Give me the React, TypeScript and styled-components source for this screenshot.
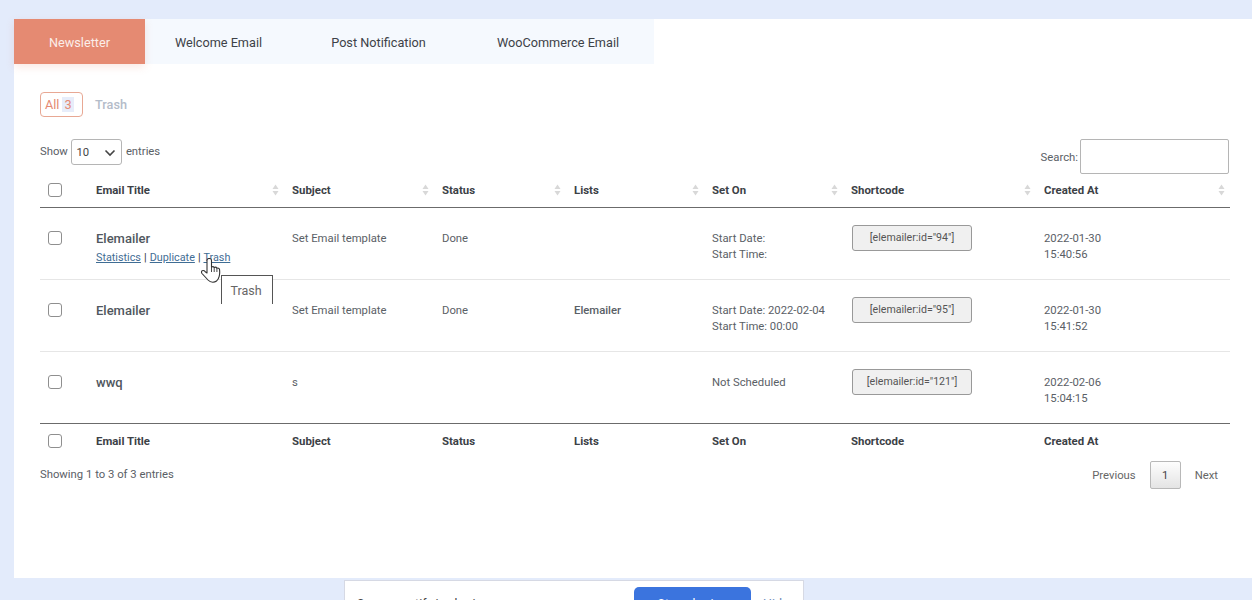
import React from 'react';
import styled, { createGlobalStyle } from 'styled-components';

const GlobalStyle = createGlobalStyle`
  html, body {
    margin: 0;
    padding: 0;
    height: 600px;
    overflow: hidden;
    background: #e3ebfb;
    font-family: Roboto, "Noto Sans", sans-serif;
    font-size: 11.3px;
    color: #5a6066;
  }
`;

const Page = styled.div`
  height: 600px;
  padding-top: 19px;
  box-sizing: border-box;
  overflow: hidden;
`;

const Panel = styled.main`
  margin-left: 14px;
  height: 559px;
  background: #fff;
  box-sizing: border-box;
`;

const TabBar = styled.nav`
  display: flex;
  width: 640px;
  height: 45px;
  background: #f5f9fe;
`;

const Tab = styled.div<{ $active?: boolean; $width: number }>`
  width: ${(p) => p.$width}px;
  display: flex;
  align-items: center;
  justify-content: center;
  padding-top: 1px;
  box-sizing: border-box;
  font-size: 12.7px;
  color: ${(p) => (p.$active ? '#fbeee9' : '#3d4248')};
  background: ${(p) => (p.$active ? '#e58a72' : 'transparent')};
  box-shadow: ${(p) => (p.$active ? '0 3px 8px rgba(229, 138, 114, 0.2)' : 'none')};
`;

const Content = styled.div`
  padding: 28px 22px 0 26px;
`;

const StatusFilter = styled.div`
  display: flex;
  align-items: center;
  gap: 12px;
  height: 25px;
  font-size: 12.7px;
`;

const AllPill = styled.div`
  display: flex;
  align-items: center;
  gap: 3px;
  box-sizing: border-box;
  width: 43px;
  height: 25px;
  padding: 0 4px;
  border: 1px solid #e8a894;
  border-radius: 4px;
  color: #e58a72;
`;

const Count = styled.span`
  background: #e7edfa;
  padding: 0 2px;
`;

const TrashFilter = styled.span`
  color: #b4bcc9;
  font-weight: 500;
`;

const Controls = styled.div`
  display: flex;
  justify-content: space-between;
  align-items: flex-start;
  margin-top: 22px;
  height: 34px;
`;

const LengthControl = styled.div`
  display: flex;
  align-items: flex-start;
  gap: 3.500px;
  line-height: 26px;
`;

const FakeSelect = styled.div`
  display: flex;
  align-items: center;
  justify-content: space-between;
  box-sizing: border-box;
  width: 51px;
  height: 26px;
  padding: 2px 5px 0 4px;
  border: 1px solid #b5b5b5;
  border-radius: 3px;
  color: #444;
  font-size: 11.3px;
`;

const SearchControl = styled.label`
  display: flex;
  align-items: flex-start;
  gap: 2px;
  margin-right: 1px;
  line-height: 37px;
`;

const SearchBox = styled.div`
  box-sizing: border-box;
  width: 149px;
  height: 35px;
  border: 1px solid #b5b5b5;
  border-radius: 2px;
`;

const Table = styled.table`
  width: 1190px;
  border-collapse: collapse;
  table-layout: fixed;
`;

const HeadCell = styled.th<{ $edge: 'top' | 'bottom' }>`
  position: relative;
  height: 34px;
  padding: ${(p) => (p.$edge === 'top' ? '2px' : '1px')} 8px 0;
  box-sizing: border-box;
  text-align: left;
  font-weight: 700;
  font-size: 11.4px;
  color: #3c4146;
  border-${(p) => p.$edge}: 1px solid #6b6b6b;
`;

const Row = styled.tr`
  border-bottom: 1px solid #e6e6e6;
  &:last-child {
    border-bottom: none;
  }
`;

const Cell = styled.td`
  height: 72px;
  box-sizing: border-box;
  padding: 23px 8px 0;
  vertical-align: top;
  line-height: 16px;
  position: relative;
`;

const ShortcodeCell = styled(Cell)`
  padding-top: 17px;
`;

const Title = styled.div`
  font-size: 13px;
  font-weight: 500;
  color: #50575e;
  line-height: 16px;
`;

const RowActions = styled.div`
  margin-top: 3px;
  font-size: 10.8px;
  word-spacing: 0.4px;
  color: #333;
  white-space: nowrap;
  a {
    color: #3f6d94;
    text-decoration: underline;
  }
`;

const Strong = styled.span`
  font-weight: 500;
`;

const Box = styled.span`
  display: block;
  box-sizing: border-box;
  width: 14px;
  height: 14px;
  border: 1.3px solid #8f8f8f;
  border-radius: 3px;
  background: #fff;
`;

const ShortcodeBox = styled.div`
  display: flex;
  align-items: center;
  justify-content: center;
  box-sizing: border-box;
  width: 120px;
  height: 26px;
  margin-left: 1px;
  font-size: 10.6px;
  color: #555;
  background: #f0f0f0;
  border: 1px solid #999;
  border-radius: 3px;
`;

const SortArrows = styled.svg`
  position: absolute;
  right: 5px;
  top: 11px;
`;

const Tooltip = styled.div`
  position: absolute;
  left: 133px;
  top: 67px;
  width: 52px;
  height: 29px;
  box-sizing: border-box;
  padding: 7px 2px 0 0;
  text-align: center;
  font-size: 12.5px;
  color: #666;
  background: #fff;
  border: 1px solid #555;
  border-bottom: none;
  z-index: 2;
`;

const Cursor = styled.svg`
  position: absolute;
  left: 113px;
  top: 50px;
  z-index: 3;
`;

const Footer = styled.div`
  display: flex;
  justify-content: space-between;
  align-items: flex-start;
  margin-top: 4px;
`;

const Info = styled.div`
  margin-top: 7px;
`;

const Pager = styled.div`
  display: flex;
  align-items: center;
  gap: 14px;
  margin-right: 12px;
  color: #666;
`;

const PageNumber = styled.div`
  display: flex;
  align-items: center;
  justify-content: center;
  box-sizing: border-box;
  width: 31px;
  height: 28px;
  color: #444;
  background: linear-gradient(#fdfdfd, #e4e4e4);
  border: 1px solid #b8b8b8;
  border-radius: 2px;
`;

const NoticeBar = styled.div`
  display: flex;
  align-items: flex-start;
  box-sizing: border-box;
  width: 460px;
  height: 60px;
  margin: 2px 0 0 344px;
  padding: 6px 12px 0 12px;
  background: #fff;
  border: 1px solid #d6d9e4;
`;

const NoticeText = styled.div`
  flex: 1;
  padding-top: 9px;
  font-size: 12.5px;
  color: #444;
`;

const NoticeButton = styled.div`
  width: 117px;
  height: 40px;
  padding-top: 9px;
  box-sizing: border-box;
  text-align: center;
  font-size: 12.5px;
  color: #fff;
  background: #3b74de;
  border-radius: 5px 5px 0 0;
`;

const NoticeLink = styled.div`
  width: 28px;
  margin-left: 12px;
  padding-top: 9px;
  font-size: 12.5px;
  color: #6a86b8;
`;

const columns = [
  { label: 'Email Title', width: 196 },
  { label: 'Subject', width: 150 },
  { label: 'Status', width: 132 },
  { label: 'Lists', width: 138 },
  { label: 'Set On', width: 139 },
  { label: 'Shortcode', width: 193 },
  { label: 'Created At', width: 194 },
];

const rows = [
  {
    title: 'Elemailer',
    subject: 'Set Email template',
    status: 'Done',
    lists: '',
    setOn: ['Start Date:', 'Start Time:'],
    shortcode: '[elemailer:id="94"]',
    created: ['2022-01-30', '15:40:56'],
  },
  {
    title: 'Elemailer',
    subject: 'Set Email template',
    status: 'Done',
    lists: 'Elemailer',
    setOn: ['Start Date: 2022-02-04', 'Start Time: 00:00'],
    shortcode: '[elemailer:id="95"]',
    created: ['2022-01-30', '15:41:52'],
  },
  {
    title: 'wwq',
    subject: 's',
    status: '',
    lists: '',
    setOn: ['Not Scheduled'],
    shortcode: '[elemailer:id="121"]',
    created: ['2022-02-06', '15:04:15'],
  },
];

const Sort = () => (
  <SortArrows width="7" height="12" viewBox="0 0 7 12">
    <path d="M3.5 0.5 L6.5 5 H0.5 Z" fill="#d8d8d8" />
    <path d="M3.5 11.5 L6.5 7 H0.5 Z" fill="#d8d8d8" />
  </SortArrows>
);

const HandCursor = () => (
  <Cursor width="21" height="26" viewBox="0 0 21 26">
    <path
      d="M6 2.500c0-1.200.9-2 2.200-2s2.300.8 2.300 2V9c1-.5 2.200-.3 2.700.5 1-.5 2.200-.2 2.700.7 1-.4 2.300 0 2.600 1.200.3 2 .2 5-.3 7-.4 1.800-1.400 3.500-2.700 4.600-1 .8-2.400 1.200-3.700 1.200-2 0-3.500-.8-4.800-2.200L1 15.500c-.8-1-.7-2.200.2-2.700 1-.5 2.200-.1 3 .9L6 15Z"
      fill="#fff"
      stroke="#333"
      strokeWidth="1.100"
      strokeLinejoin="round"
    />
    <path d="M10.500 9v5M13.200 9.500V14M15.900 10.200V14" stroke="#333" strokeWidth="0.900" fill="none" />
  </Cursor>
);

const HeaderRow = ({ edge, sortable }: { edge: 'top' | 'bottom'; sortable?: boolean }) => (
  <tr>
    <HeadCell $edge={edge}>
      <Box />
    </HeadCell>
    {columns.map((c) => (
      <HeadCell $edge={edge} key={c.label}>
        {c.label}
        {sortable && <Sort />}
      </HeadCell>
    ))}
  </tr>
);

export default function App() {
  return (
    <>
      <GlobalStyle />
      <Page>
        <Panel>
          <TabBar>
            <Tab $active $width={131}>Newsletter</Tab>
            <Tab $width={147}>Welcome Email</Tab>
            <Tab $width={173}>Post Notification</Tab>
            <Tab $width={186}>WooCommerce Email</Tab>
          </TabBar>
          <Content>
            <StatusFilter>
              <AllPill>
                All <Count>3</Count>
              </AllPill>
              <TrashFilter>Trash</TrashFilter>
            </StatusFilter>
            <Controls>
              <LengthControl>
                Show
                <FakeSelect>
                  10
                  <svg width="12" height="8" viewBox="0 0 12 8">
                    <path d="M1.500 1.500 6 6l4.500-4.500" stroke="#444" strokeWidth="1.600" fill="none" />
                  </svg>
                </FakeSelect>
                entries
              </LengthControl>
              <SearchControl>
                Search:
                <SearchBox />
              </SearchControl>
            </Controls>
            <Table>
              <colgroup>
                <col style={{ width: 48 }} />
                {columns.map((c) => (
                  <col key={c.label} style={{ width: c.width }} />
                ))}
              </colgroup>
              <thead>
                <HeaderRow edge="bottom" sortable />
              </thead>
              <tbody>
                {rows.map((r, i) => (
                  <Row key={r.shortcode}>
                    <Cell>
                      <Box />
                    </Cell>
                    <Cell>
                      <Title>{r.title}</Title>
                      {i === 0 && (
                        <>
                          <RowActions>
                            <a>Statistics</a> | <a>Duplicate</a> | <a>Trash</a>
                          </RowActions>
                          <HandCursor />
                          <Tooltip>Trash</Tooltip>
                        </>
                      )}
                    </Cell>
                    <Cell>{r.subject}</Cell>
                    <Cell>{r.status}</Cell>
                    <Cell>
                      <Strong>{r.lists}</Strong>
                    </Cell>
                    <Cell>
                      {r.setOn.map((line) => (
                        <div key={line}>{line}</div>
                      ))}
                    </Cell>
                    <ShortcodeCell>
                      <ShortcodeBox>{r.shortcode}</ShortcodeBox>
                    </ShortcodeCell>
                    <Cell>
                      {r.created.map((line) => (
                        <div key={line}>{line}</div>
                      ))}
                    </Cell>
                  </Row>
                ))}
              </tbody>
              <tfoot>
                <HeaderRow edge="top" />
              </tfoot>
            </Table>
            <Footer>
              <Info>Showing 1 to 3 of 3 entries</Info>
              <Pager>
                <span>Previous</span>
                <PageNumber>1</PageNumber>
                <span>Next</span>
              </Pager>
            </Footer>
          </Content>
        </Panel>
        <NoticeBar>
          <NoticeText>Screencastify is sharing your screen.</NoticeText>
          <NoticeButton>Stop sharing</NoticeButton>
          <NoticeLink>Hide</NoticeLink>
        </NoticeBar>
      </Page>
    </>
  );
}
